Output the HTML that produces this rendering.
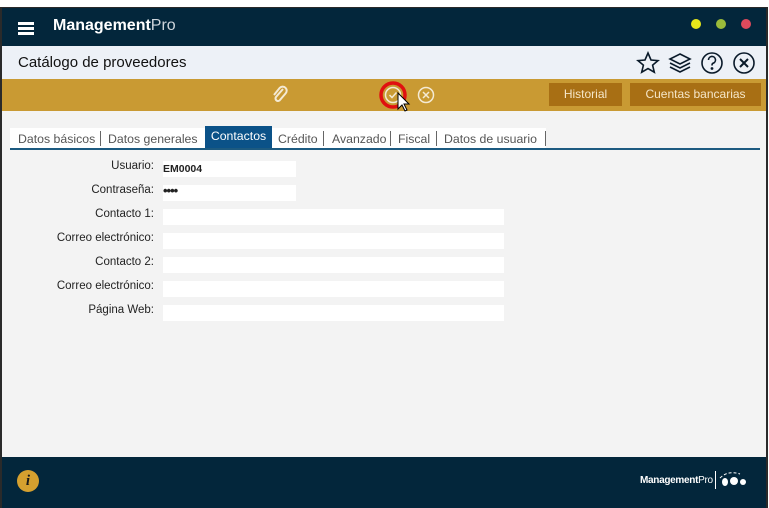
<!DOCTYPE html>
<html><head><meta charset="utf-8"><style>
*{margin:0;padding:0;box-sizing:border-box}
body{width:769px;height:508px;background:#fff;position:relative;overflow:hidden;font-family:"Liberation Sans",sans-serif;font-size:11px;color:#222}
.frame{position:absolute;left:0;top:7px;width:768px;height:501px;background:#f3f3f3;border-left:2px solid #2a2a2a;border-right:2px solid #2a2a2a;border-top:1px solid #2a2a2a}
.hdr{position:absolute;left:2px;top:8px;width:764px;height:38px;background:#03263b}
.tb{position:absolute;left:2px;top:46px;width:764px;height:33px;background:#edf1f7}
.gold{position:absolute;left:2px;top:79px;width:764px;height:32px;background:#c99a33}
.btn{position:absolute;top:83px;height:23px;background:#a86f14;color:#f5e6c8;font-size:12px;line-height:23px;text-align:center}
.tabs{position:absolute;left:10px;top:128px;height:20px;background:#fff;width:536px}
.tab{position:absolute;top:0;height:20px;line-height:22px;font-size:12.3px;color:#555}
.sep{position:absolute;top:3px;width:1px;height:15px;background:#666}
.uline{position:absolute;left:10px;top:148px;width:750px;height:2px;background:#1c5a80}
.lbl{position:absolute;right:615px;font-size:11.5px;color:#222;text-align:right}
.in{position:absolute;left:163px;height:16px;background:#fff}
.ftr{position:absolute;left:2px;top:457px;width:764px;height:51px;background:#03263b}
</style></head><body>
<div class="frame"></div>
<div class="hdr">
 <div style="position:absolute;left:16px;top:14px;width:16px;height:3px;background:#fff;box-shadow:0 5px 0 #fff,0 10px 0 #fff"></div>
 <div style="position:absolute;left:51px;top:9px;color:#fff;font-size:16px;font-weight:bold">Management<span style="font-weight:normal;color:#cfd6dc">Pro</span></div>
 <div style="position:absolute;left:689px;top:11px;width:10px;height:10px;border-radius:50%;background:#e8e81a"></div>
 <div style="position:absolute;left:714px;top:11px;width:10px;height:10px;border-radius:50%;background:#9bbb3a"></div>
 <div style="position:absolute;left:739px;top:11px;width:10px;height:10px;border-radius:50%;background:#e04a5c"></div>
</div>
<div class="tb">
 <div style="position:absolute;left:16px;top:8px;font-size:15px;color:#111">Catálogo de proveedores</div>
 <svg style="position:absolute;left:634px;top:5px" width="124" height="24" viewBox="0 0 124 24" fill="none" stroke="#0a1a2a" stroke-width="1.6">
  <path d="M12 2l3 7 7 .6-5.4 4.6 1.7 7L12 17.5 5.7 21.2l1.7-7L2 9.6 9 9z"/>
  <path d="M44 3l10 5-10 5-10-5z M34 12l10 5 10-5 M34 16l10 5 10-5"/>
  <circle cx="76" cy="12" r="10"/><path d="M72.5 9a3.5 3.5 0 1 1 4.5 3.3c-1 .4-1 1-1 2.2"/><circle cx="76" cy="17.5" r=".6" fill="#0a1a2a"/>
  <circle cx="108" cy="12" r="10"/><path d="M104 8l8 8M112 8l-8 8" stroke-width="2"/>
 </svg>
</div>
<div class="gold">
 <svg style="position:absolute;left:268px;top:6px" width="20" height="20" viewBox="0 0 20 20" fill="none" stroke="#f4ead4" stroke-width="2"><path d="M13 4l-7 8a2.5 2.5 0 0 0 3.5 3.5l6-7a4 4 0 0 0-5.7-5.7L4 10"/></svg>
 <svg style="position:absolute;left:374px;top:0px" width="70" height="34" viewBox="0 0 70 34" fill="none">
  <circle cx="17" cy="16" r="12" stroke="#e01010" stroke-width="3.5"/>
  <circle cx="17" cy="16" r="7.5" stroke="#f4ead4" stroke-width="1.5"/>
  <path d="M13.5 16l2.5 2.5 4.5-5" stroke="#f4ead4" stroke-width="1.5"/>
  <circle cx="50" cy="16" r="7.5" stroke="#f4ead4" stroke-width="1.5"/>
  <path d="M47 13l6 6M53 13l-6 6" stroke="#f4ead4" stroke-width="1.5"/>
  <path d="M22 14v16l4-4 3 6 2-1-3-6h5z" fill="#fff" stroke="#000" stroke-width="1"/>
 </svg>
</div>
<div class="btn" style="left:549px;width:73px">Historial</div>
<div class="btn" style="left:630px;width:131px">Cuentas bancarias</div>
<div class="tabs">
 <div class="tab" style="left:8px">Datos básicos</div><div class="sep" style="left:90px"></div>
 <div class="tab" style="left:98px">Datos generales</div>
 <div class="tab" style="left:195px;width:67px;top:-2px;height:22px;background:#0b5288;color:#fff;text-align:center;line-height:20px">Contactos</div>
 <div class="tab" style="left:268px">Crédito</div><div class="sep" style="left:313px"></div>
 <div class="tab" style="left:322px">Avanzado</div><div class="sep" style="left:380px"></div>
 <div class="tab" style="left:388px">Fiscal</div><div class="sep" style="left:426px"></div>
 <div class="tab" style="left:434px">Datos de usuario</div><div class="sep" style="left:535px"></div>
</div>
<div class="uline"></div>
<div class="lbl" style="top:160px">Usuario:</div><div class="in" style="top:161px;width:133px;font-weight:bold;font-size:10.5px;line-height:16px">EM0004</div>
<div class="lbl" style="top:184px">Contraseña:</div><div class="in" style="top:185px;width:133px;line-height:12px;font-size:13px;font-weight:bold;letter-spacing:-1px">••••</div>
<div class="lbl" style="top:208px">Contacto 1:</div><div class="in" style="top:209px;width:341px"></div>
<div class="lbl" style="top:232px">Correo electrónico:</div><div class="in" style="top:233px;width:341px"></div>
<div class="lbl" style="top:256px">Contacto 2:</div><div class="in" style="top:257px;width:341px"></div>
<div class="lbl" style="top:280px">Correo electrónico:</div><div class="in" style="top:281px;width:341px"></div>
<div class="lbl" style="top:304px">Página Web:</div><div class="in" style="top:305px;width:341px"></div>
<div class="ftr">
 <div style="position:absolute;left:15px;top:13px;width:22px;height:22px;border-radius:50%;background:#d5a02f;color:#1a1a1a;font:italic bold 15px 'Liberation Serif',serif;text-align:center;line-height:22px">i</div>
 <div style="position:absolute;left:638px;top:18px;color:#fff;font-size:10px;font-weight:bold;letter-spacing:-0.3px">Management<span style="font-weight:normal">Pro</span></div>
 <div style="position:absolute;left:713px;top:14px;width:1px;height:18px;background:#fff"></div>
 <svg style="position:absolute;left:716px;top:13px" width="30" height="20" viewBox="0 0 30 20" fill="#fff"><ellipse cx="7" cy="12" rx="3" ry="4"/><ellipse cx="16" cy="11" rx="4" ry="4"/><ellipse cx="25" cy="12" rx="3" ry="3"/><path d="M2 8q8-8 20-4" stroke="#fff" fill="none" stroke-dasharray="3 2"/></svg>
</div>
</body></html>
